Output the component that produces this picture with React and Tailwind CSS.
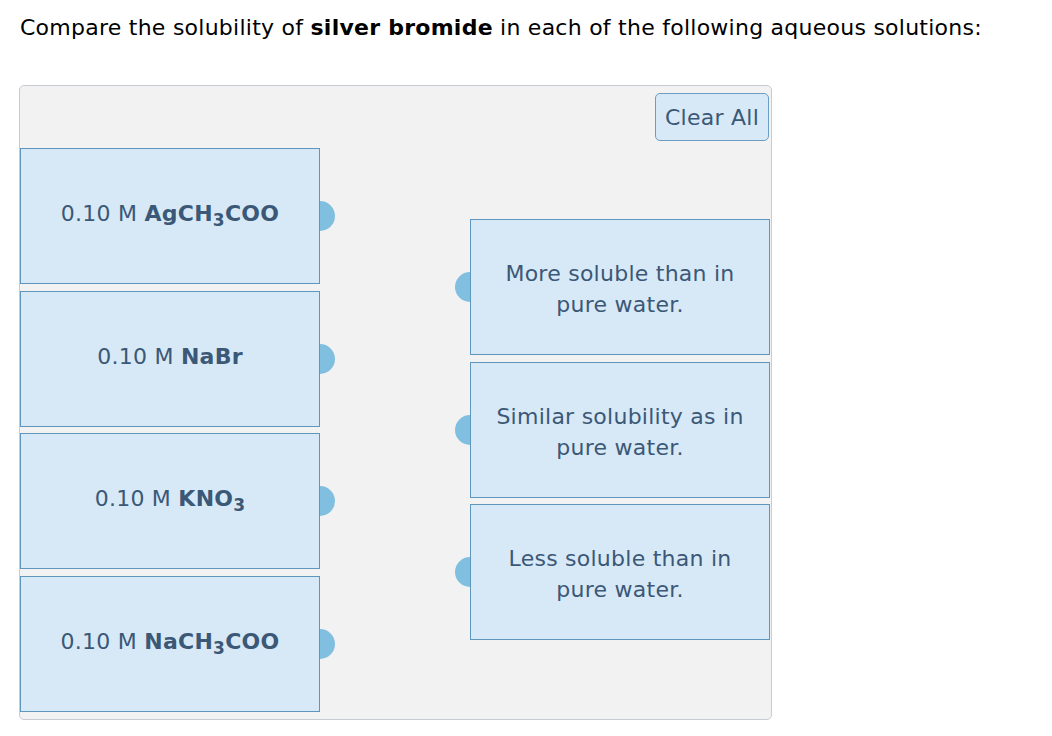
import React from 'react';

const reagents = [
  { id: 'agac', prefix: '0.10 M ', parts: ['AgCH', '3', 'COO'] },
  { id: 'nabr', prefix: '0.10 M ', parts: ['NaBr'] },
  { id: 'kno3', prefix: '0.10 M ', parts: ['KNO', '3'] },
  { id: 'naac', prefix: '0.10 M ', parts: ['NaCH', '3', 'COO'] },
];

const answers = [
  'More soluble than in pure water.',
  'Similar solubility as in pure water.',
  'Less soluble than in pure water.',
];

function Formula({ parts }) {
  // odd entries are subscripts
  return (
    <span className="font-bold">
      {parts.map((p, i) =>
        i % 2 === 1 ? (
          <span key={i} className="inline-block text-[17px] relative top-[5px]">{p}</span>
        ) : (
          <span key={i}>{p}</span>
        )
      )}
    </span>
  );
}

function Dot({ side }) {
  return (
    <span
      className={`absolute top-1/2 -translate-y-1/2 w-[30px] h-[30px] rounded-full bg-[#80bfdf] ${
        side === 'right' ? 'right-[-15px]' : 'left-[-15px]'
      }`}
    />
  );
}

export default function App() {
  return (
    <div
      className="min-h-screen bg-white text-[22px] leading-[31px] tracking-[0.25px]"
      style={{ fontFamily: '"DejaVu Sans", Verdana, sans-serif' }}
    >
      <p className="pl-[20px] pt-[12px] text-black">
        Compare the solubility of <strong>silver bromide</strong> in each of the following aqueous solutions:
      </p>

      <div className="ml-[19px] mt-[42px] w-[753px] h-[635px] bg-[#f2f2f2] border border-[#c6ccd2] rounded-[5px] pt-[7px] pr-[1px]">
        <div className="flex justify-end pr-[1px]">
          <button className="h-[48px] px-[9px] rounded-[5px] bg-[#d7e9f7] border border-[#6d9dc2] text-[#3b5876] text-[22px] tracking-[0.25px]">
            Clear All
          </button>
        </div>

        <div className="flex justify-between mt-[7px]">
          <div className="flex flex-col gap-[6.7px]">
            {reagents.map((r) => (
              <div key={r.id} className="relative w-[300px] h-[136px]">
                <Dot side="right" />
                <div className="relative w-full h-full flex items-center justify-center pb-[4px] bg-[#d7e9f7] border border-[#5f96bd] text-[#3b5876]">
                  <span>
                    {r.prefix}
                    <Formula parts={r.parts} />
                  </span>
                </div>
              </div>
            ))}
          </div>

          <div className="flex flex-col gap-[6.5px] mt-[71px]">
            {answers.map((a) => (
              <div key={a} className="relative w-[300px] h-[136px]">
                <Dot side="left" />
                <div className="relative w-full h-full flex items-center justify-center text-center px-[20px] pt-[4px] bg-[#d7e9f7] border border-[#5f96bd] text-[#3b5876]">
                  {a}
                </div>
              </div>
            ))}
          </div>
        </div>
      </div>
    </div>
  );
}
